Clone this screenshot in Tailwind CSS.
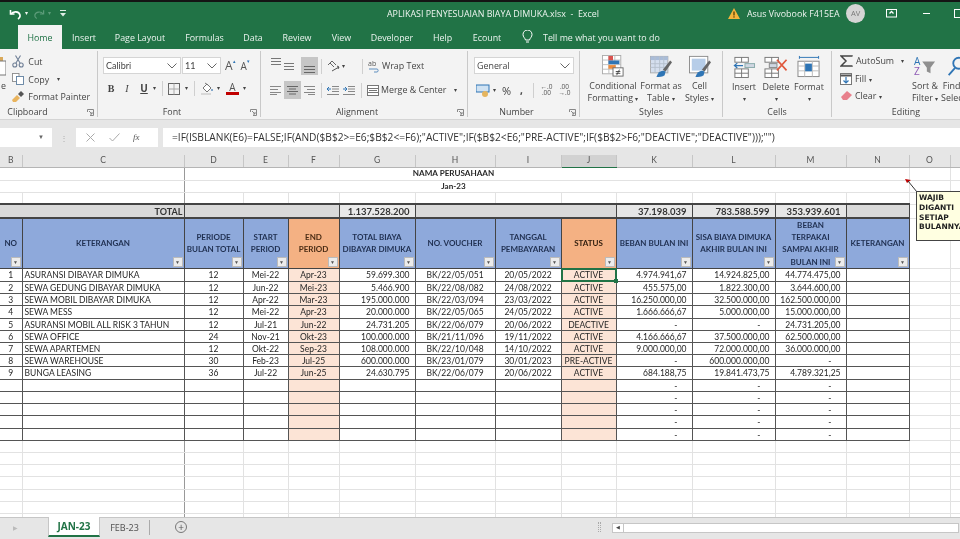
<!DOCTYPE html>
<html><head><meta charset="utf-8"><script src="https://cdn.jsdelivr.net/npm/@tailwindcss/browser@4"></script></head>
<body class="m-0 overflow-hidden">
<div class="w-[960px] h-[539px] flex flex-col overflow-hidden bg-[#e6e6e6] font-['Open_Sans','Noto_Sans',sans-serif] text-[#444] blur-[0.4px]">

<!-- title bar -->
<div class="h-[25px] shrink-0 bg-[#217346] border-t-2 border-t-[#141414] flex items-center text-[#eef5f0] text-[8.9px] whitespace-nowrap">
  <div class="w-[387px] flex items-center shrink-0">
    <svg class="ml-[9px]" width="13" height="12" viewBox="0 0 13 12" fill="none" stroke="#fff" stroke-width="1.6"><path d="M1.5 2v4h4"/><path d="M2 6c2-3 8-3 9 1 .3 1.500-.5 3-2 4"/></svg>
    <span class="ml-[3px] text-[6px]">▾</span>
    <svg class="ml-[5px]" width="12" height="12" viewBox="0 0 13 12" fill="none" stroke="#5d9c7a" stroke-width="1.3"><path d="M11.500 2v4h-4"/><path d="M11 6C9 3 3 3 2 7c-.3 1.500.5 3 2 4"/></svg>
    <span class="ml-[3px] text-[6px] text-[#5d9c7a]">▾</span>
    <svg class="ml-[8px]" width="8" height="7" viewBox="0 0 8 7" fill="#dfeee6"><rect x="1" y="0" width="6" height="1"/><path d="M1 3h6L4 6.500z"/></svg>
  </div>
  <span class="w-[211px] shrink-0">APLIKASI PENYESUAIAN BIAYA DIMUKA.xlsx&nbsp; -&nbsp; Excel</span>
  <svg class="ml-[130px] shrink-0" width="12" height="11" viewBox="0 0 12 11"><path d="M6 0l6 11H0z" fill="#f5b53c"/><rect x="5.400" y="3.500" width="1.200" height="4" fill="#4a3500"/><rect x="5.400" y="8.300" width="1.200" height="1.300" fill="#4a3500"/></svg>
  <span class="ml-[7px] w-[92px] shrink-0">Asus Vivobook F415EA</span>
  <span class="ml-[7px] w-[19px] h-[19px] rounded-full bg-[#d5d5d5] text-[#777] text-[7.5px] flex items-center justify-center shrink-0">AV</span>
  <svg class="ml-[21px] shrink-0" width="11" height="9" viewBox="0 0 11 9" fill="none" stroke="#fff"><rect x=".5" y=".5" width="10" height="7.500"/><path d="M3.500 4.500L5.500 2.500 7.500 4.500" stroke-width="1.300"/></svg>
  <span class="ml-[26px] w-[7px] h-px bg-white shrink-0"></span>
  <span class="ml-[24px] w-[9px] h-[9px] border border-white shrink-0"></span>
</div>

<!-- tabs -->
<div class="h-[24px] shrink-0 bg-[#217346] flex text-[#eaf3ee] text-[8.9px] whitespace-nowrap">
  <span class="ml-[18px] w-[44px] bg-[#f3f3f3] text-[#1f7145] flex items-center justify-center pt-[2px]">Home</span>
  <span class="w-[44px] flex items-center justify-center pt-[2px]">Insert</span>
  <span class="w-[68px] flex items-center justify-center pt-[2px]">Page Layout</span>
  <span class="w-[61px] flex items-center justify-center pt-[2px]">Formulas</span>
  <span class="w-[36px] flex items-center justify-center pt-[2px]">Data</span>
  <span class="w-[52px] flex items-center justify-center pt-[2px]">Review</span>
  <span class="w-[37px] flex items-center justify-center pt-[2px]">View</span>
  <span class="w-[64px] flex items-center justify-center pt-[2px]">Developer</span>
  <span class="w-[37px] flex items-center justify-center pt-[2px]">Help</span>
  <span class="w-[52px] flex items-center justify-center pt-[2px]">Ecount</span>
  <span class="ml-[9px] w-[11px] flex items-center"><svg width="11" height="14" viewBox="0 0 11 14" fill="none" stroke="#fff"><path d="M3.500 10C3 8 1 7 1 4.500a4.500 4.500 0 0 1 9 0C10 7 8 8 7.500 10z"/><path d="M4 12h3"/></svg></span>
  <span class="ml-[10px] flex items-center pt-[2px]">Tell me what you want to do</span>
</div>

<!-- ribbon -->
<div class="h-[71px] shrink-0 bg-[#f3f3f3] border-b border-b-[#d4d4d4] flex text-[8.9px] text-[#444] whitespace-nowrap overflow-hidden">

  <!-- Clipboard -->
  <div class="relative w-[98px] shrink-0 flex flex-col my-[2px] border-r border-r-[#c9c9c9]">
    <div class="flex-1 flex min-h-0">
      <div class="w-[6px] shrink-0 overflow-hidden relative">
        <svg class="mt-[4px] -ml-[12px]" width="18" height="22" viewBox="0 0 18 22"><rect x="1" y="2" width="14" height="18" fill="#d9a95a"/><rect x="6" y="6" width="12" height="14" fill="#fff" stroke="#777"/></svg>
        <span class="absolute right-0 top-[31px] leading-none">e</span>
      </div>
      <div class="ml-[6px] flex flex-col pt-[2px]">
        <div class="h-[18px] flex items-center"><svg width="12" height="13" viewBox="0 0 12 13" fill="none" stroke="#6f7f96" stroke-width="1.100"><circle cx="2.800" cy="10" r="2"/><circle cx="9.200" cy="10" r="2"/><path d="M3.800 8.300L8.500 .5M8.200 8.300L3.500 .5"/></svg><span class="ml-[2px]">&nbsp;Cut</span></div>
        <div class="h-[18px] flex items-center"><svg width="12" height="12" viewBox="0 0 12 12" fill="#fff" stroke="#8b8b8b" stroke-width=".9"><rect x=".5" y=".5" width="6.500" height="8"/><rect x="4.500" y="3.500" width="7" height="8" stroke="#5f7f9f"/></svg><span class="ml-[2px]">&nbsp;Copy</span><span class="ml-[8px] text-[6px]">▾</span></div>
        <div class="h-[17px] flex items-center"><svg width="12" height="11" viewBox="0 0 12 11"><path d="M0 9l5-5 3 3-4 4H1z" fill="#e9b45e"/><path d="M6 3l3-3 3 3-3 3z" fill="#555"/></svg><span class="ml-[2px]">&nbsp;Format Painter</span></div>
      </div>
    </div>
    <div class="h-[14px] -mb-[2px] text-center leading-[13px] pr-[42px]">Clipboard</div>
    <svg class="absolute right-[3px] bottom-[1px]" width="7" height="7" viewBox="0 0 7 7" fill="none" stroke="#888"><path d="M.5 3V.5h6v6H3"/><path d="M2 2l3 3M5 3v2H3"/></svg>
  </div>

  <!-- Font -->
  <div class="relative w-[163px] shrink-0 flex flex-col my-[2px] border-r border-r-[#c9c9c9]">
    <div class="flex-1 min-h-0 pl-[5px] pt-[6px] flex flex-col">
      <div class="h-[17px] flex items-center">
        <div class="w-[78px] h-[17px] bg-white border border-[#d5d5d5] flex items-center justify-between pl-[2px] pr-[3px]"><span class="font-['Lato'] text-[9px]">Calibri</span><svg width="10" height="6" viewBox="0 0 10 6" fill="none" stroke="#666"><path d="M.5.500l4.500 4.500 4.500-4.500"/></svg></div>
        <div class="ml-[1px] w-[39px] h-[17px] bg-white border border-[#d5d5d5] flex items-center justify-between pl-[2px] pr-[3px]"><span class="font-['Lato'] text-[9px]">11</span><svg width="10" height="6" viewBox="0 0 10 6" fill="none" stroke="#666"><path d="M.5.500l4.500 4.500 4.500-4.500"/></svg></div>
        <span class="ml-[4px] text-[12px] leading-none text-[#555]">A</span><span class="text-[5px] text-[#2f75b5] -mt-[8px]">▴</span>
        <span class="ml-[5px] text-[10px] leading-none text-[#555]">A</span><span class="text-[5px] text-[#2f75b5] -mt-[8px]">▾</span>
      </div>
      <div class="h-[23px] mt-[3px] flex items-center pl-[1px]">
        <b class="w-[14px] text-center font-['Liberation_Serif'] text-[#444] text-[10px]">B</b>
        <i class="ml-[3px] w-[12px] text-center font-['Liberation_Serif'] text-[10px]">I</i>
        <u class="ml-[4px] w-[14px] text-center text-[10px] font-bold">U</u>
        <span class="ml-[2px] text-[6px]">▾</span>
        <span class="ml-[6px] w-px h-[15px] bg-[#cfcfcf]"></span>
        <svg class="ml-[5px]" width="12" height="12" viewBox="0 0 12 12" fill="none" stroke="#666"><rect x=".5" y=".5" width="11" height="11"/><path d="M6 .5v11M.5 6h11" stroke="#aaa"/></svg>
        <span class="ml-[5px] text-[6px]">▾</span>
        <span class="ml-[6px] w-px h-[15px] bg-[#cfcfcf]"></span>
        <svg class="ml-[6px]" width="12" height="13" viewBox="0 0 12 13"><path d="M2 6l4-4 4 4-4 4z" fill="#fff" stroke="#777"/><path d="M4 1l3 2" stroke="#777"/><rect x="0" y="11" width="10" height="2" fill="#d8d8d8"/><circle cx="11" cy="8" r="1" fill="#5f8fbf"/></svg>
        <span class="ml-[4px] text-[6px]">▾</span>
        <span class="ml-[6px] w-[13px] flex flex-col items-center"><b class="text-[10px] leading-[10px] font-normal text-[#555]">A</b><span class="w-[13px] h-[3px] bg-[#c00000]"></span></span>
        <span class="ml-[4px] text-[6px]">▾</span>
      </div>
    </div>
    <div class="h-[14px] -mb-[2px] text-center leading-[13px] pr-[14px]">Font</div>
    <svg class="absolute right-[3px] bottom-[1px]" width="7" height="7" viewBox="0 0 7 7" fill="none" stroke="#888"><path d="M.5 3V.5h6v6H3"/><path d="M2 2l3 3M5 3v2H3"/></svg>
  </div>

  <!-- Alignment -->
  <div class="relative w-[207px] shrink-0 flex flex-col my-[2px] border-r border-r-[#c9c9c9]">
    <div class="flex-1 min-h-0 flex flex-col pl-[9px] pt-[6px]">
      <div class="h-[18px] flex items-center">
        <svg width="12" height="9" viewBox="0 0 12 9" class="self-start mt-[1px]" stroke="#777"><path d="M1 .5h10M1 3.500h10M1 6.500h10"/></svg>
        <svg class="ml-[1px]" width="12" height="7" viewBox="0 0 12 7" stroke="#777"><path d="M1 .5h10M1 3.500h10M1 6.500h10"/></svg>
        <span class="ml-[6px] w-[17px] h-[18px] bg-[#c6c6c6] flex items-end justify-center pb-[2px]"><svg width="11" height="8" viewBox="0 0 11 8" stroke="#666"><path d="M0 1.500h11M0 4.500h11M0 7.500h11"/></svg></span>
        <span class="ml-[3px] w-px h-[15px] bg-[#cfcfcf]"></span>
        <svg class="ml-[5px]" width="13" height="12" viewBox="0 0 13 12" fill="none" stroke="#666"><path d="M1 5l4-4 4 4M3 3l4 4"/><path d="M5 11l7-4M10 6l2 1-1 2" stroke="#555"/></svg>
        <span class="ml-[2px] text-[6px]">▾</span>
        <span class="ml-[17px] w-px h-[15px] bg-[#cfcfcf]"></span>
        <svg class="ml-[5px]" width="11" height="13" viewBox="0 0 11 13" fill="none" stroke="#777"><text x="0" y="6" font-size="7" fill="#555" stroke="none" font-family="Open Sans">ab</text><path d="M1 9h8c1.500 0 1.500 3 0 3H6" stroke="#5f8fbf"/></svg>
        <span class="ml-[3px]">Wrap Text</span>
      </div>
      <div class="h-[18px] mt-[6px] flex items-center">
        <svg width="11" height="9" viewBox="0 0 11 9" stroke="#888"><path d="M0 .5h11M0 3.500h8M0 6.500h11M0 8.500h7"/></svg>
        <span class="ml-[3px] w-[17px] h-[18px] bg-[#c6c6c6] flex items-center justify-center"><svg width="11" height="9" viewBox="0 0 11 9" stroke="#666"><path d="M0 .5h11M2 3h7M0 5.500h11M2 8h7"/></svg></span>
        <svg class="ml-[3px]" width="11" height="9" viewBox="0 0 11 9" stroke="#888"><path d="M0 .5h11M3 3.500h8M0 6.500h11M4 8.500h7"/></svg>
        <span class="ml-[6px] w-px h-[15px] bg-[#cfcfcf]"></span>
        <svg class="ml-[5px]" width="12" height="10" viewBox="0 0 12 10" stroke="#888"><path d="M5 1.500h7M5 4h7M5 6.500h7M0 9.500h12"/><path d="M0 4h4M2 2L0 4l2 2" stroke="#2f75b5" fill="none"/></svg>
        <svg class="ml-[4px]" width="12" height="10" viewBox="0 0 12 10" stroke="#888"><path d="M5 1.500h7M5 4h7M5 6.500h7M0 9.500h12"/><path d="M0 4h4M2 2l2 2-2 2" stroke="#2f75b5" fill="none"/></svg>
        <span class="ml-[6px] w-px h-[15px] bg-[#cfcfcf]"></span>
        <svg class="ml-[5px]" width="12" height="11" viewBox="0 0 12 11" fill="#fff" stroke="#777"><rect x=".5" y=".5" width="11" height="10"/><path d="M.5 3.500h11M.5 7.500h11M2 5.500h8" fill="none"/></svg>
        <span class="ml-[2px]">Merge &amp; Center</span>
        <span class="ml-[8px] text-[6px]">▾</span>
      </div>
    </div>
    <div class="h-[14px] -mb-[2px] text-center leading-[13px] pr-[14px]">Alignment</div>
    <svg class="absolute right-[3px] bottom-[1px]" width="7" height="7" viewBox="0 0 7 7" fill="none" stroke="#888"><path d="M.5 3V.5h6v6H3"/><path d="M2 2l3 3M5 3v2H3"/></svg>
  </div>

  <!-- Number -->
  <div class="relative w-[112px] shrink-0 flex flex-col my-[2px] border-r border-r-[#c9c9c9]">
    <div class="flex-1 min-h-0 flex flex-col pl-[6px] pt-[6px]">
      <div class="w-[100px] h-[17px] bg-white border border-[#d5d5d5] flex items-center justify-between pl-[2px] pr-[3px]"><span>General</span><svg width="10" height="6" viewBox="0 0 10 6" fill="none" stroke="#666"><path d="M.5.500l4.500 4.500 4.500-4.500"/></svg></div>
      <div class="h-[18px] mt-[7px] flex items-center pl-[2px]">
        <svg width="14" height="13" viewBox="0 0 14 13"><rect x="0" y="1" width="13" height="7" fill="#cfe2f3" stroke="#2f75b5"/><circle cx="9" cy="10" r="3" fill="#e5b55f"/></svg>
        <span class="ml-[3px] text-[6px]">▾</span>
        <span class="ml-[6px] text-[11px] leading-none">%</span>
        <b class="ml-[9px] text-[10px] leading-none">,</b>
        <span class="ml-[10px] w-px h-[15px] bg-[#cfcfcf]"></span>
        <span class="ml-[6px] text-[6.500px] leading-[6px] text-center text-[#555] w-[13px]">←.0<br>.00</span>
        <span class="ml-[5px] text-[6.500px] leading-[6px] text-center text-[#555] w-[13px]">.00<br>→.0</span>
      </div>
    </div>
    <div class="h-[14px] -mb-[2px] text-center leading-[13px] pr-[14px]">Number</div>
    <svg class="absolute right-[3px] bottom-[1px]" width="7" height="7" viewBox="0 0 7 7" fill="none" stroke="#888"><path d="M.5 3V.5h6v6H3"/><path d="M2 2l3 3M5 3v2H3"/></svg>
  </div>

  <!-- Styles -->
  <div class="w-[143px] shrink-0 flex flex-col my-[2px] border-r border-r-[#c9c9c9]">
    <div class="flex-1 min-h-0 flex pl-[7px] leading-[12px] text-center">
      <div class="w-[52px] flex flex-col items-center pt-[4px]">
        <svg width="24" height="24" viewBox="0 0 24 24" class="mb-[2px]"><rect x=".5" y=".5" width="20" height="20" fill="#fff" stroke="#aaa"/><path d="M.5 5.500h20M.5 10.500h20M.5 15.500h20M7.500.5v20M14 .5v20" stroke="#bbb"/><rect x="7" y="1" width="5" height="5" fill="#d9534f"/><rect x="7" y="6" width="12" height="4" fill="#2f75b5"/><rect x="7" y="11" width="8" height="4" fill="#ed8b3c"/><rect x="12" y="14" width="11" height="9" fill="#fff" stroke="#666"/><path d="M15 18h5M15 20h5M19 16l-3 6" stroke="#444" fill="none"/></svg>
        <span class="mt-[1px]">Conditional</span><span>Formatting <span class="text-[6px]">▾</span></span>
      </div>
      <div class="w-[44px] flex flex-col items-center pt-[4px]">
        <svg width="24" height="24" viewBox="0 0 24 24" class="mb-[2px]"><rect x=".5" y="1.500" width="19" height="18" fill="#d5dfee" stroke="#aaa"/><rect x=".5" y="1.500" width="19" height="4" fill="#a9bcd8"/><path d="M.5 9.500h19M.5 13.500h19M5.500 1.500v18M10.500 1.500v18M15 1.500v18" stroke="#b5bfcc"/><path d="M14 16l8-10 2 2-7 10z" fill="#666"/><path d="M7 24c2-6 6-8 10-6l-1 4c-2 2-6 2-9 2z" fill="#2f75b5"/></svg>
        <span class="mt-[1px]">Format as</span><span>Table <span class="text-[6px]">▾</span></span>
      </div>
      <div class="w-[33px] flex flex-col items-center pt-[4px]">
        <svg width="24" height="24" viewBox="0 0 24 24" class="mb-[2px]"><rect x=".5" y="1.500" width="20" height="18" fill="#fff" stroke="#888"/><rect x="3" y="4" width="15" height="13" fill="#b6cde8"/><path d="M14 16l8-10 2 2-7 10z" fill="#666"/><path d="M7 24c2-6 6-8 10-6l-1 4c-2 2-6 2-9 2z" fill="#2f75b5"/></svg>
        <span class="mt-[1px]">Cell</span><span>Styles <span class="text-[6px]">▾</span></span>
      </div>
    </div>
    <div class="h-[14px] -mb-[2px] text-center leading-[13px]">Styles</div>
  </div>

  <!-- Cells -->
  <div class="w-[109px] shrink-0 flex flex-col my-[2px] border-r border-r-[#c9c9c9]">
    <div class="flex-1 min-h-0 flex pl-[5px] leading-[12px] text-center">
      <div class="w-[32px] flex flex-col items-center pt-[4px]">
        <svg width="24" height="24" viewBox="0 0 24 24" class="mb-[2px]" fill="#fff" stroke="#777"><rect x="2.500" y="2.500" width="14" height="5"/><path d="M9.500 2.500v5"/><rect x="2.500" y="14.500" width="14" height="9"/><path d="M9.500 14.500v9M2.500 19h14" fill="none"/><path d="M2 11h9M5 8.500L2 11l3 2.500" stroke="#2f75b5" fill="none" stroke-width="1.300"/><rect x="13" y="9" width="10" height="4" fill="#d0d7e2" stroke="#8aa"/></svg>
        <span class="mt-[1px]">Insert</span><span class="text-[6px]">▾</span>
      </div>
      <div class="w-[32px] flex flex-col items-center pt-[4px]">
        <svg width="24" height="24" viewBox="0 0 24 24" class="mb-[2px]" fill="#fff" stroke="#777"><rect x=".5" y="2.500" width="14" height="5"/><path d="M7.500 2.500v5"/><rect x=".5" y="14.500" width="14" height="9"/><path d="M7.500 14.500v9M.5 19h14" fill="none"/><rect x="5" y="9" width="8" height="4" fill="#d0d7e2" stroke="#888"/><path d="M13 5l10 11M23 5L13 16" stroke="#e0593d" stroke-width="1.800" fill="none"/></svg>
        <span class="mt-[1px]">Delete</span><span class="text-[6px]">▾</span>
      </div>
      <div class="w-[34px] flex flex-col items-center pt-[4px]">
        <svg width="24" height="24" viewBox="0 0 24 24" class="mb-[2px]" fill="none"><path d="M2 2.500h20M2 1v3M22 1v3" stroke="#2f75b5"/><rect x=".5" y="6.500" width="22" height="16" fill="#fff" stroke="#888"/><path d="M.5 11.500h22M.5 16.500h22M7.500 6.500v16M15.500 6.500v16" stroke="#bbb"/><rect x="8" y="9" width="7" height="8" fill="#2f75b5"/></svg>
        <span class="mt-[1px]">Format</span><span class="text-[6px]">▾</span>
      </div>
    </div>
    <div class="h-[14px] -mb-[2px] text-center leading-[13px]">Cells</div>
  </div>

  <!-- Editing -->
  <div class="w-[148px] shrink-0 flex flex-col my-[2px]">
    <div class="flex-1 min-h-0 flex pl-[8px]">
      <div class="w-[71px] flex flex-col pt-[1px]">
        <div class="h-[18px] flex items-center"><svg width="13" height="12" viewBox="0 0 13 12" fill="none" stroke="#444" stroke-width="1.500"><path d="M12 1.500V1H1l5 5-5 5h11v-.5"/></svg><span class="ml-[3px]">AutoSum</span><span class="ml-[7px] text-[6px]">▾</span></div>
        <div class="h-[17px] flex items-center"><svg width="12" height="12" viewBox="0 0 12 12" fill="#fff" stroke="#777"><rect x=".5" y=".5" width="11" height="11"/><path d="M.5 2.500h11" stroke-width="2" stroke="#555"/><path d="M6 4v6M3.500 7.500L6 10l2.500-2.500" stroke="#2f75b5" stroke-width="1.200" fill="none"/></svg><span class="ml-[3px]">Fill <span class="text-[6px]">▾</span></span></div>
        <div class="h-[18px] flex items-center"><svg width="12" height="10" viewBox="0 0 12 10"><path d="M1 6l6-6 5 4-5 5H3z" fill="#e8808c"/></svg><span class="ml-[3px]">Clear <span class="text-[6px]">▾</span></span></div>
      </div>
      <div class="w-[28px] flex flex-col items-center pt-[4px] leading-[12px] text-center">
        <svg width="24" height="24" viewBox="0 0 24 24" class="mb-[2px]"><text x="0" y="11" font-size="11" font-family="Open Sans" fill="#2f75b5">A</text><text x="0" y="22" font-size="11" font-family="Open Sans" fill="#8e5ab5">Z</text><path d="M9 7h14l-5 7v6l-4-2v-4z" fill="#8f8f8f"/></svg>
        <span class="mt-[1px]">Sort &amp;</span><span>Filter <span class="text-[6px]">▾</span></span>
      </div>
      <div class="w-[34px] flex flex-col items-center pt-[4px] leading-[12px] text-center">
        <svg width="24" height="24" viewBox="0 0 24 24" class="mb-[2px]" fill="none" stroke="#2f75b5" stroke-width="2"><circle cx="15" cy="9" r="6"/><path d="M11 14l-7 8"/></svg>
        <span class="mt-[1px]">Find &amp;</span><span>Select <span class="text-[6px]">▾</span></span>
      </div>
    </div>
    <div class="h-[14px] -mb-[2px] text-center leading-[13px]">Editing</div>
  </div>
</div>

<!-- formula bar -->
<div class="h-[35px] shrink-0 flex items-start pt-[8px] bg-[#e6e6e6]">
  <div class="w-[52px] h-[19px] bg-white flex items-center justify-end pr-[8px] shrink-0"><span class="text-[6px] text-[#666]">▼</span></div>
  <div class="w-[24px] h-[19px] flex items-center justify-center text-[#aaa] text-[8px] shrink-0">⋮</div>
  <div class="w-[82px] h-[19px] bg-white flex items-center shrink-0 text-[#aaa]">
    <svg class="ml-[10px]" width="9" height="9" viewBox="0 0 9 9" stroke="#aaa" fill="none"><path d="M.5.5l8 8M8.500.5l-8 8"/></svg>
    <svg class="ml-[14px]" width="11" height="9" viewBox="0 0 11 9" stroke="#aaa" fill="none"><path d="M.5 5l3 3 7-7.500"/></svg>
    <i class="ml-[13px] text-[9px] font-['Liberation_Serif'] text-[#555]">fx</i>
  </div>
  <div class="ml-[5px] flex-1 h-[19px] bg-white flex items-center pl-[9px] text-[10.200px] text-[#333] whitespace-nowrap">=IF(ISBLANK(E6)=FALSE;IF(AND($B$2&gt;=E6;$B$2&lt;=F6);"ACTIVE";IF($B$2&lt;E6;"PRE-ACTIVE";IF($B$2&gt;F6;"DEACTIVE";"DEACTIVE")));"")</div>
</div>

<!-- sheet -->
<div class="relative flex-1 min-h-0 overflow-hidden bg-white">
<table class="table-fixed border-collapse w-[1010px] font-['Lato',sans-serif] text-[8.500px] leading-[11px] text-[#262626] whitespace-nowrap [&_td:first-child]:border-l-0!">
<colgroup><col class="w-[22px]"><col class="w-[162px]"><col class="w-[59px]"><col class="w-[45px]"><col class="w-[51px]"><col class="w-[76px]"><col class="w-[80px]"><col class="w-[66px]"><col class="w-[55px]"><col class="w-[76px]"><col class="w-[83px]"><col class="w-[71px]"><col class="w-[63px]"><col class="w-[41px]"><col class="w-[60px]"></colgroup>
<tbody>
<tr class="[&>td]:h-[12px] [&>td]:p-0 [&>td]:bg-[#e6e6e6] [&>td]:border-r [&>td]:border-r-[#c6c6c6] [&>td]:border-b [&>td]:border-b-[#b5b5b5] [&>td]:text-center [&>td]:text-[#555]"><td>B</td><td>C</td><td>D</td><td>E</td><td>F</td><td>G</td><td>H</td><td>I</td><td class="bg-[#d2d2d2]! border-b-[#217346]!">J</td><td>K</td><td>L</td><td>M</td><td>N</td><td>O</td><td></td></tr>
<tr class="[&>td]:h-[13px] [&>td]:p-0 [&>td]:border [&>td]:border-[#e2e2e2]"><td colspan="2" class="border-r-[#999]!"></td><td colspan="11" class="text-center font-bold pr-[186px]! text-[8.100px]">NAMA PERUSAHAAN</td><td></td><td></td></tr>
<tr class="[&>td]:h-[12px] [&>td]:p-0 [&>td]:border [&>td]:border-[#e2e2e2]"><td colspan="2" class="border-r-[#999]!"></td><td colspan="11" class="text-center font-bold pr-[186px]! text-[8.100px]">Jan-23</td><td></td><td></td></tr>
<tr class="[&>td]:h-[12px] [&>td]:p-0 [&>td]:border [&>td]:border-[#e2e2e2] [&>td]:border-b-[#444]"><td></td><td class="border-r-[#999]!"></td><td></td><td></td><td></td><td></td><td></td><td></td><td></td><td></td><td></td><td></td><td></td><td class="border-b-[#e2e2e2]!"></td><td class="border-b-[#e2e2e2]!"></td></tr>
<tr class="[&>td]:h-[14px] [&>td]:p-0 text-[9.500px] font-bold text-[#333]">
  <td colspan="2" class="bg-[#d9d9d9] border-y-2 border-r border-[#444] text-right pr-[1px]! text-[9px]">TOTAL</td>
  <td colspan="3" class="bg-[#d9d9d9] border-y-2 border-r border-[#444]"></td>
  <td class="bg-[#e9e9e9] border-y-2 border-x border-[#444] text-right pr-[5px]!">1.137.528.200</td>
  <td colspan="3" class="bg-[#d9d9d9] border-y-2 border-r border-[#444]"></td>
  <td class="bg-[#e6e6e6] border-y-2 border-x border-[#444] text-right pr-[5px]!">37.198.039</td>
  <td class="bg-[#e6e6e6] border-y-2 border-x border-[#444] text-right pr-[5px]!">783.588.599</td>
  <td class="bg-[#e6e6e6] border-y-2 border-x border-[#444] text-right pr-[5px]!">353.939.601</td>
  <td class="bg-[#d9d9d9] border-y-2 border-x border-[#444]"></td>
  <td class="border border-[#e2e2e2]"></td><td class="border border-[#e2e2e2]"></td>
</tr>
<tr class="[&>td]:h-[49px] [&>td]:p-0 [&>td]:border [&>td]:border-[#444] font-bold text-center text-[8px] leading-[12.2px] text-[#1f2f50]">
  <td class="relative bg-[#8ea9db]">NO<span class="absolute right-[1px] bottom-[1px] w-[10px] h-[10px] bg-[#ececec] border border-[#bbb] flex items-center justify-center text-[5px] text-[#555]">▼</span></td>
  <td class="relative bg-[#8ea9db]">KETERANGAN<span class="absolute right-[1px] bottom-[1px] w-[10px] h-[10px] bg-[#ececec] border border-[#bbb] flex items-center justify-center text-[5px] text-[#555]">▼</span></td>
  <td class="relative bg-[#8ea9db]">PERIODE<br>BULAN TOTAL<span class="absolute right-[1px] bottom-[1px] w-[10px] h-[10px] bg-[#ececec] border border-[#bbb] flex items-center justify-center text-[5px] text-[#555]">▼</span></td>
  <td class="relative bg-[#8ea9db]">START<br>PERIOD<span class="absolute right-[1px] bottom-[1px] w-[10px] h-[10px] bg-[#ececec] border border-[#bbb] flex items-center justify-center text-[5px] text-[#555]">▼</span></td>
  <td class="relative bg-[#f4b183] text-[#4a2c14]">END<br>PERIOD<span class="absolute right-[1px] bottom-[1px] w-[10px] h-[10px] bg-[#ececec] border border-[#bbb] flex items-center justify-center text-[5px] text-[#555]">▼</span></td>
  <td class="relative bg-[#8ea9db]">TOTAL BIAYA<br>DIBAYAR DIMUKA<span class="absolute right-[1px] bottom-[1px] w-[10px] h-[10px] bg-[#ececec] border border-[#bbb] flex items-center justify-center text-[5px] text-[#555]">▼</span></td>
  <td class="relative bg-[#8ea9db]">NO. VOUCHER<span class="absolute right-[1px] bottom-[1px] w-[10px] h-[10px] bg-[#ececec] border border-[#bbb] flex items-center justify-center text-[5px] text-[#555]">▼</span></td>
  <td class="relative bg-[#8ea9db]">TANGGAL<br>PEMBAYARAN<span class="absolute right-[1px] bottom-[1px] w-[10px] h-[10px] bg-[#ececec] border border-[#bbb] flex items-center justify-center text-[5px] text-[#555]">▼</span></td>
  <td class="relative bg-[#f4b183] text-[#2e1c0c]">STATUS<span class="absolute right-[1px] bottom-[1px] w-[10px] h-[10px] bg-[#ececec] border border-[#bbb] flex items-center justify-center text-[5px] text-[#555]">▼</span></td>
  <td class="relative bg-[#8ea9db]">BEBAN BULAN INI<span class="absolute right-[1px] bottom-[1px] w-[10px] h-[10px] bg-[#ececec] border border-[#bbb] flex items-center justify-center text-[5px] text-[#555]">▼</span></td>
  <td class="relative bg-[#8ea9db]">SISA BIAYA DIMUKA<br>AKHIR BULAN INI<span class="absolute right-[1px] bottom-[1px] w-[10px] h-[10px] bg-[#ececec] border border-[#bbb] flex items-center justify-center text-[5px] text-[#555]">▼</span></td>
  <td class="relative bg-[#8ea9db]">BEBAN<br>TERPAKAI<br>SAMPAI AKHIR<br>BULAN INI<span class="absolute right-[1px] bottom-[1px] w-[10px] h-[10px] bg-[#ececec] border border-[#bbb] flex items-center justify-center text-[5px] text-[#555]">▼</span></td>
  <td class="relative bg-[#8ea9db]">KETERANGAN<span class="absolute right-[1px] bottom-[1px] w-[10px] h-[10px] bg-[#ececec] border border-[#bbb] flex items-center justify-center text-[5px] text-[#555]">▼</span></td>
  <td class="border-y-[#e2e2e2]! border-r-[#e2e2e2]!"></td><td class="border-[#e2e2e2]!"></td>
</tr>
<tr class="[&>td]:h-[13px] [&>td]:p-0 [&>td]:pt-px [&>td]:border [&>td]:border-[#555] leading-[10px]"><td class="text-center">1</td><td class="pl-[2px]!">ASURANSI DIBAYAR DIMUKA</td><td class="text-center">12</td><td class="text-center">Mei-22</td><td class="text-center bg-[#fce4d6]">Apr-23</td><td class="text-right pr-[5px]!">59.699.300</td><td class="text-center">BK/22/05/051</td><td class="text-center">20/05/2022</td><td class="relative text-center bg-[#fce4d6]">ACTIVE<span class="absolute -inset-px border-2 border-[#217346]"></span><span class="absolute -right-[2px] -bottom-[2px] w-[4px] h-[4px] bg-[#217346]"></span></td><td class="text-right pr-[5px]!">4.974.941,67</td><td class="text-right pr-[5px]!">14.924.825,00</td><td class="text-right pr-[5px]!">44.774.475,00</td><td></td><td class="border-[#e2e2e2]!"></td><td class="border-[#e2e2e2]!"></td></tr>
<tr class="[&>td]:h-[12px] [&>td]:p-0 [&>td]:pt-px [&>td]:border [&>td]:border-[#555] leading-[10px]"><td class="text-center">2</td><td class="pl-[2px]!">SEWA GEDUNG DIBAYAR DIMUKA</td><td class="text-center">12</td><td class="text-center">Jun-22</td><td class="text-center bg-[#fce4d6]">Mei-23</td><td class="text-right pr-[5px]!">5.466.900</td><td class="text-center">BK/22/08/082</td><td class="text-center">24/08/2022</td><td class="text-center bg-[#fce4d6]">ACTIVE</td><td class="text-right pr-[5px]!">455.575,00</td><td class="text-right pr-[5px]!">1.822.300,00</td><td class="text-right pr-[5px]!">3.644.600,00</td><td></td><td class="border-[#e2e2e2]!"></td><td class="border-[#e2e2e2]!"></td></tr>
<tr class="[&>td]:h-[12px] [&>td]:p-0 [&>td]:pt-px [&>td]:border [&>td]:border-[#555] leading-[10px]"><td class="text-center">3</td><td class="pl-[2px]!">SEWA MOBIL DIBAYAR DIMUKA</td><td class="text-center">12</td><td class="text-center">Apr-22</td><td class="text-center bg-[#fce4d6]">Mar-23</td><td class="text-right pr-[5px]!">195.000.000</td><td class="text-center">BK/22/03/094</td><td class="text-center">23/03/2022</td><td class="text-center bg-[#fce4d6]">ACTIVE</td><td class="text-right pr-[5px]!">16.250.000,00</td><td class="text-right pr-[5px]!">32.500.000,00</td><td class="text-right pr-[5px]!">162.500.000,00</td><td></td><td class="border-[#e2e2e2]!"></td><td class="border-[#e2e2e2]!"></td></tr>
<tr class="[&>td]:h-[13px] [&>td]:p-0 [&>td]:pt-px [&>td]:border [&>td]:border-[#555] leading-[10px]"><td class="text-center">4</td><td class="pl-[2px]!">SEWA MESS</td><td class="text-center">12</td><td class="text-center">Mei-22</td><td class="text-center bg-[#fce4d6]">Apr-23</td><td class="text-right pr-[5px]!">20.000.000</td><td class="text-center">BK/22/05/065</td><td class="text-center">24/05/2022</td><td class="text-center bg-[#fce4d6]">ACTIVE</td><td class="text-right pr-[5px]!">1.666.666,67</td><td class="text-right pr-[5px]!">5.000.000,00</td><td class="text-right pr-[5px]!">15.000.000,00</td><td></td><td class="border-[#e2e2e2]!"></td><td class="border-[#e2e2e2]!"></td></tr>
<tr class="[&>td]:h-[12px] [&>td]:p-0 [&>td]:pt-px [&>td]:border [&>td]:border-[#555] leading-[10px]"><td class="text-center">5</td><td class="pl-[2px]!">ASURANSI MOBIL ALL RISK 3 TAHUN</td><td class="text-center">12</td><td class="text-center">Jul-21</td><td class="text-center bg-[#fce4d6]">Jun-22</td><td class="text-right pr-[5px]!">24.731.205</td><td class="text-center">BK/22/06/079</td><td class="text-center">20/06/2022</td><td class="text-center bg-[#fce4d6]">DEACTIVE</td><td class="text-right pr-[14px]!">-</td><td class="text-right pr-[14px]!">-</td><td class="text-right pr-[5px]!">24.731.205,00</td><td></td><td class="border-[#e2e2e2]!"></td><td class="border-[#e2e2e2]!"></td></tr>
<tr class="[&>td]:h-[12px] [&>td]:p-0 [&>td]:pt-px [&>td]:border [&>td]:border-[#555] leading-[10px]"><td class="text-center">6</td><td class="pl-[2px]!">SEWA OFFICE</td><td class="text-center">24</td><td class="text-center">Nov-21</td><td class="text-center bg-[#fce4d6]">Okt-23</td><td class="text-right pr-[5px]!">100.000.000</td><td class="text-center">BK/21/11/096</td><td class="text-center">19/11/2022</td><td class="text-center bg-[#fce4d6]">ACTIVE</td><td class="text-right pr-[5px]!">4.166.666,67</td><td class="text-right pr-[5px]!">37.500.000,00</td><td class="text-right pr-[5px]!">62.500.000,00</td><td></td><td class="border-[#e2e2e2]!"></td><td class="border-[#e2e2e2]!"></td></tr>
<tr class="[&>td]:h-[12px] [&>td]:p-0 [&>td]:pt-px [&>td]:border [&>td]:border-[#555] leading-[10px]"><td class="text-center">7</td><td class="pl-[2px]!">SEWA APARTEMEN</td><td class="text-center">12</td><td class="text-center">Okt-22</td><td class="text-center bg-[#fce4d6]">Sep-23</td><td class="text-right pr-[5px]!">108.000.000</td><td class="text-center">BK/22/10/048</td><td class="text-center">14/10/2022</td><td class="text-center bg-[#fce4d6]">ACTIVE</td><td class="text-right pr-[5px]!">9.000.000,00</td><td class="text-right pr-[5px]!">72.000.000,00</td><td class="text-right pr-[5px]!">36.000.000,00</td><td></td><td class="border-[#e2e2e2]!"></td><td class="border-[#e2e2e2]!"></td></tr>
<tr class="[&>td]:h-[12px] [&>td]:p-0 [&>td]:pt-px [&>td]:border [&>td]:border-[#555] leading-[10px]"><td class="text-center">8</td><td class="pl-[2px]!">SEWA WAREHOUSE</td><td class="text-center">30</td><td class="text-center">Feb-23</td><td class="text-center bg-[#fce4d6]">Jul-25</td><td class="text-right pr-[5px]!">600.000.000</td><td class="text-center">BK/23/01/079</td><td class="text-center">30/01/2023</td><td class="text-center bg-[#fce4d6]">PRE-ACTIVE</td><td class="text-right pr-[14px]!">-</td><td class="text-right pr-[5px]!">600.000.000,00</td><td class="text-right pr-[14px]!">-</td><td></td><td class="border-[#e2e2e2]!"></td><td class="border-[#e2e2e2]!"></td></tr>
<tr class="[&>td]:h-[13px] [&>td]:p-0 [&>td]:pt-px [&>td]:border [&>td]:border-[#555] leading-[10px]"><td class="text-center">9</td><td class="pl-[2px]!">BUNGA LEASING</td><td class="text-center">36</td><td class="text-center">Jul-22</td><td class="text-center bg-[#fce4d6]">Jun-25</td><td class="text-right pr-[5px]!">24.630.795</td><td class="text-center">BK/22/06/079</td><td class="text-center">20/06/2022</td><td class="text-center bg-[#fce4d6]">ACTIVE</td><td class="text-right pr-[5px]!">684.188,75</td><td class="text-right pr-[5px]!">19.841.473,75</td><td class="text-right pr-[5px]!">4.789.321,25</td><td></td><td class="border-[#e2e2e2]!"></td><td class="border-[#e2e2e2]!"></td></tr>
<tr class="[&>td]:h-[12px] [&>td]:p-0 [&>td]:pt-px [&>td]:border [&>td]:border-[#555] leading-[10px]"><td></td><td></td><td></td><td></td><td class="bg-[#fce4d6]"></td><td></td><td></td><td></td><td class="bg-[#fce4d6]"></td><td class="text-right pr-[14px]!">-</td><td class="text-right pr-[14px]!">-</td><td class="text-right pr-[14px]!">-</td><td></td><td class="border-[#e2e2e2]!"></td><td class="border-[#e2e2e2]!"></td></tr>
<tr class="[&>td]:h-[12px] [&>td]:p-0 [&>td]:pt-px [&>td]:border [&>td]:border-[#555] leading-[10px]"><td></td><td></td><td></td><td></td><td class="bg-[#fce4d6]"></td><td></td><td></td><td></td><td class="bg-[#fce4d6]"></td><td class="text-right pr-[14px]!">-</td><td class="text-right pr-[14px]!">-</td><td class="text-right pr-[14px]!">-</td><td></td><td class="border-[#e2e2e2]!"></td><td class="border-[#e2e2e2]!"></td></tr>
<tr class="[&>td]:h-[12px] [&>td]:p-0 [&>td]:pt-px [&>td]:border [&>td]:border-[#555] leading-[10px]"><td></td><td></td><td></td><td></td><td class="bg-[#fce4d6]"></td><td></td><td></td><td></td><td class="bg-[#fce4d6]"></td><td class="text-right pr-[14px]!">-</td><td class="text-right pr-[14px]!">-</td><td class="text-right pr-[14px]!">-</td><td></td><td class="border-[#e2e2e2]!"></td><td class="border-[#e2e2e2]!"></td></tr>
<tr class="[&>td]:h-[13px] [&>td]:p-0 [&>td]:pt-px [&>td]:border [&>td]:border-[#555] leading-[10px]"><td></td><td></td><td></td><td></td><td class="bg-[#fce4d6]"></td><td></td><td></td><td></td><td class="bg-[#fce4d6]"></td><td class="text-right pr-[14px]!">-</td><td class="text-right pr-[14px]!">-</td><td class="text-right pr-[14px]!">-</td><td></td><td class="border-[#e2e2e2]!"></td><td class="border-[#e2e2e2]!"></td></tr>
<tr class="[&>td]:h-[12px] [&>td]:p-0 [&>td]:pt-px [&>td]:border [&>td]:border-[#555] leading-[10px]"><td></td><td></td><td></td><td></td><td class="bg-[#fce4d6]"></td><td></td><td></td><td></td><td class="bg-[#fce4d6]"></td><td class="text-right pr-[14px]!">-</td><td class="text-right pr-[14px]!">-</td><td class="text-right pr-[14px]!">-</td><td></td><td class="border-[#e2e2e2]!"></td><td class="border-[#e2e2e2]!"></td></tr>
<tr class="[&>td]:h-[12px] [&>td]:p-0 [&>td]:border [&>td]:border-[#e2e2e2]"><td></td><td class="border-r-[#999]!"></td><td></td><td></td><td></td><td></td><td></td><td></td><td></td><td></td><td></td><td></td><td></td><td></td><td></td></tr>
<tr class="[&>td]:h-[12px] [&>td]:p-0 [&>td]:border [&>td]:border-[#e2e2e2]"><td></td><td class="border-r-[#999]!"></td><td></td><td></td><td></td><td></td><td></td><td></td><td></td><td></td><td></td><td></td><td></td><td></td><td></td></tr>
<tr class="[&>td]:h-[12px] [&>td]:p-0 [&>td]:border [&>td]:border-[#e2e2e2]"><td></td><td class="border-r-[#999]!"></td><td></td><td></td><td></td><td></td><td></td><td></td><td></td><td></td><td></td><td></td><td></td><td></td><td></td></tr>
<tr class="[&>td]:h-[13px] [&>td]:p-0 [&>td]:border [&>td]:border-[#e2e2e2]"><td></td><td class="border-r-[#999]!"></td><td></td><td></td><td></td><td></td><td></td><td></td><td></td><td></td><td></td><td></td><td></td><td></td><td></td></tr>
<tr class="[&>td]:h-[12px] [&>td]:p-0 [&>td]:border [&>td]:border-[#e2e2e2]"><td></td><td class="border-r-[#999]!"></td><td></td><td></td><td></td><td></td><td></td><td></td><td></td><td></td><td></td><td></td><td></td><td></td><td></td></tr>
<tr class="[&>td]:h-[12px] [&>td]:p-0 [&>td]:border [&>td]:border-[#e2e2e2]"><td></td><td class="border-r-[#999]!"></td><td></td><td></td><td></td><td></td><td></td><td></td><td></td><td></td><td></td><td></td><td></td><td></td><td></td></tr>
<tr class="[&>td]:h-[12px] [&>td]:p-0 [&>td]:border [&>td]:border-[#e2e2e2]"><td></td><td class="border-r-[#999]!"></td><td></td><td></td><td></td><td></td><td></td><td></td><td></td><td></td><td></td><td></td><td></td><td></td><td></td></tr>
</tbody></table>

<!-- comment note -->
<svg class="absolute left-[903px] top-[23px]" width="16" height="16" viewBox="0 0 16 16" fill="none"><path d="M2 1l6 1-4 3z" fill="#c00000"/><path d="M5 3l9 11" stroke="#333"/></svg>
<div class="absolute left-[916px] top-[36px] w-[60px] h-[50px] bg-[#ffffe1] border border-[#444] pl-[2px] pt-[1px] font-['DejaVu_Sans',sans-serif] font-bold text-[7.5px] leading-[9.8px] text-[#222]">WAJIB<br>DIGANTI<br>SETIAP<br>BULANNYA</div>
</div>

<!-- sheet tabs -->
<div class="h-[22px] shrink-0 bg-[#e6e6e6] border-t border-t-[#c6c6c6] flex items-start text-[#555] text-[9px] whitespace-nowrap">
  <span class="ml-[13px] w-[35px] h-[20px] flex items-center text-[6px] text-[#bbb]">▶</span>
  <span class="w-[52px] h-[20px] bg-white border-b-2 border-b-[#217346] border-x border-x-[#c6c6c6] -mt-px flex items-center justify-center font-bold text-[#217346] text-[10px] font-['Noto_Sans']">JAN-23</span>
  <span class="w-[49px] h-[19px] flex items-center justify-center font-['Noto_Sans']">FEB-23</span>
  <span class="w-px h-[15px] mt-[2px] bg-[#aaa]"></span>
  <span class="ml-[25px] mt-[3px] w-[12px] h-[12px] rounded-full border border-[#777] flex items-center justify-center text-[10px] leading-none">+</span>
  <span class="ml-[411px] mt-[4px] w-[3px] h-[10px] border-x border-dotted border-[#aaa]"></span>
  <div class="ml-[11px] mt-[5px] w-[347px] h-[10px] bg-white border border-[#c6c6c6] flex items-center"><span class="w-[11px] h-full border-r border-r-[#c6c6c6] flex items-center justify-center text-[5px] text-[#444]">◀</span></div>
</div>
</div>
</body></html>
